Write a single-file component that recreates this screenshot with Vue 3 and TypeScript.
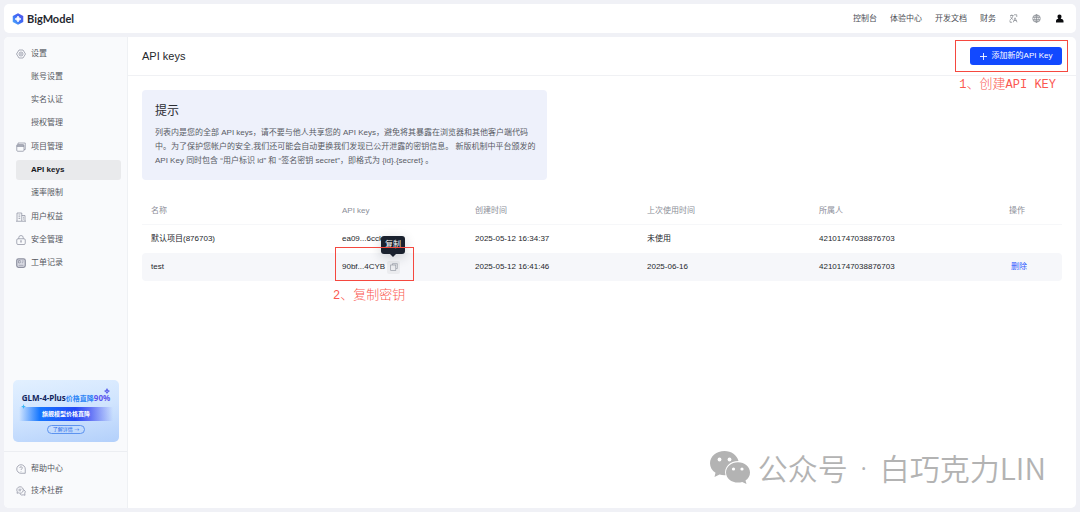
<script setup lang="ts">
interface NavGroup {
  label: string
  icon: 'gear' | 'project' | 'building' | 'lock' | 'ticket'
  children?: string[]
}

interface KeyRow {
  name: string
  key: string
  created: string
  used: string
  owner: string
  highlighted: boolean
}

const topLinks: string[] = ['控制台', '体验中心', '开发文档', '财务']

const groups: NavGroup[] = [
  { label: '设置', icon: 'gear', children: ['账号设置', '实名认证', '授权管理'] },
  { label: '项目管理', icon: 'project', children: ['API keys', '速率限制'] },
  { label: '用户权益', icon: 'building' },
  { label: '安全管理', icon: 'lock' },
  { label: '工单记录', icon: 'ticket' },
]

const rows: KeyRow[] = [
  { name: '默认项目(876703)', key: 'ea09...6cck', created: '2025-05-12 16:34:37', used: '未使用', owner: '42101747038876703', highlighted: false },
  { name: 'test', key: '90bf...4CYB', created: '2025-05-12 16:41:46', used: '2025-06-16', owner: '42101747038876703', highlighted: true },
]
</script>

<template>
  <div class="page">
    <header class="topbar">
      <a class="brand" href="#">
        <svg class="brand-mark" viewBox="0 0 24 24" aria-hidden="true">
          <defs>
            <linearGradient id="brandFill" x1="0" y1="1" x2="1" y2="0">
              <stop offset="0" stop-color="#4fb4ff" />
              <stop offset="0.5" stop-color="#3f6cf5" />
              <stop offset="1" stop-color="#5552e8" />
            </linearGradient>
          </defs>
          <path d="M12 0.5 22.500 6.2v11.6L12 23.5 1.500 17.8V6.2z" fill="url(#brandFill)" />
          <path d="M12 6q1.400 4.600 6 6-4.600 1.400-6 6-1.400-4.600-6-6 4.600-1.400 6-6z" fill="#fff" stroke="#fff" stroke-width="1.500" stroke-linejoin="round" />
        </svg>
        <span>BigModel</span>
      </a>
      <nav class="top-links">
        <a v-for="link in topLinks" :key="link" href="#">{{ link }}</a>
        <button class="icon-btn" type="button" aria-label="翻译">
          <svg viewBox="0 0 18 18" fill="none" stroke="#777b84" stroke-width="1.300">
            <path d="M2 3h7M5.500 1v2M8 3C7 7 5 10 1.500 12M3 5c1 3 3 5 5 6M10 1.500h5.500V6M8.500 16.500l3.500-9 4 9M10 13h5M2 13v3.500h4" />
          </svg>
        </button>
        <button class="icon-btn" type="button" aria-label="语言">
          <svg viewBox="0 0 18 18" fill="none" stroke="#777b84" stroke-width="1.300">
            <circle cx="9" cy="9" r="7.500" />
            <ellipse cx="9" cy="9" rx="3.500" ry="7.500" />
            <path d="M1.500 6.500h15M1.500 11.500h15M9 1.500v15" />
          </svg>
        </button>
        <button class="icon-btn" type="button" aria-label="账户">
          <svg viewBox="0 0 18 18" fill="#0b0c0f">
            <path d="M9 1c2.600 0 4 1.800 4 4.200 0 1.800-.6 3.300-1.700 4.200C15 10 17 11.500 17 14v3H2v-3c0-2.500 1.800-4 4.700-4.600C5.600 8.500 5 7 5 5.200 5 2.800 6.400 1 9 1z" />
          </svg>
        </button>
      </nav>
    </header>

    <div class="shell">
      <aside class="sidebar">
        <nav class="groups">
          <div v-for="group in groups" :key="group.label">
            <a class="item" href="#">
              <svg v-if="group.icon === 'gear'" viewBox="0 0 20 20">
                <path d="M6 2h8l5 8-5 8H6l-5-8z" stroke-linejoin="round" />
                <circle cx="10" cy="10" r="4" />
                <circle cx="10" cy="10" r="1" />
              </svg>
              <svg v-else-if="group.icon === 'project'" viewBox="0 0 20 20">
                <path d="M4 4.500V2h14.500v13H16" />
                <rect x="1.500" y="5" width="14.500" height="13.500" rx="2" />
                <path d="M1.500 8h14.500" stroke-width="3" />
              </svg>
              <svg v-else-if="group.icon === 'building'" viewBox="0 0 20 20">
                <path d="M0 18.500h20M2 18V2h9.500v16M11.500 7H18v11M5 6h3.500M5 9.500h3.500M5 13h3.500M14 10.500h2M14 14h2" />
              </svg>
              <svg v-else-if="group.icon === 'lock'" viewBox="0 0 20 20">
                <rect x="1.500" y="7.500" width="17" height="11.500" rx="2.500" />
                <path d="M5.500 7.500V5.500a4.500 4.500 0 0 1 9 0v2M10 11v4.500M8.500 12h3" />
              </svg>
              <svg v-else viewBox="0 0 20 20">
                <rect x="1.500" y="1.500" width="17" height="17" rx="3.500" fill="#dfe0e8" stroke-width="2.500" />
                <path d="M5 5v5h3.500V5zM11.500 6h4M11.500 9.500h3M5 14.500h10" />
              </svg>
              <span>{{ group.label }}</span>
            </a>
            <div v-if="group.children" class="children">
              <a
                v-for="child in group.children"
                :key="child"
                class="item child"
                :class="{ active: child === 'API keys' }"
                href="#"
              >{{ child }}</a>
            </div>
          </div>
        </nav>

        <a class="promo" href="#">
          <svg class="spark spark-top" viewBox="0 0 12 12" aria-hidden="true">
            <path d="M6 0 8 3.500 12 6 8.500 8.500 6 12 3.500 8.500 0 6 4 3.500z" fill="#5b63ea" />
            <path d="M3 5.500 6 7.500 9 5.500" fill="none" stroke="#c6ccff" />
          </svg>
          <svg class="spark spark-left" viewBox="0 0 12 12" aria-hidden="true">
            <path d="M6 0 7.500 4.500 12 6 7.500 7.500 6 12 4.500 7.500 0 6 4.500 4.500z" fill="#39b6f5" />
          </svg>
          <span class="promo-title">GLM-4-Plus<span class="promo-cut">价格直降</span><span class="promo-pct">90%</span></span>
          <span class="promo-band">旗舰模型价格直降</span>
          <span class="promo-more">了解详情 →</span>
        </a>

        <nav class="support">
          <a class="item" href="#">
            <svg viewBox="0 0 20 20">
              <path d="M18.500 18.500H10A8.500 8.500 0 1 1 18.500 10z" stroke-linejoin="round" />
              <path d="M7.500 8a2.500 2.500 0 1 1 3.500 2.300c-.7.400-1 .8-1 1.700M10 14v1.200" />
            </svg>
            <span>帮助中心</span>
          </a>
          <a class="item" href="#">
            <svg viewBox="0 0 20 20">
              <path d="M8 1.500a6.500 6.500 0 1 1-3 12.200L2 14.500l.6-3A6.500 6.500 0 0 1 8 1.500z" />
              <path d="M15 7a6 6 0 0 1 2.500 8.500l.5 3-3-.8a6 6 0 0 1-7-2M5 6.500h6M5 9.500h5" />
            </svg>
            <span>技术社群</span>
          </a>
        </nav>
      </aside>

      <main class="main">
        <div class="main-head">
          <h1>API keys</h1>
          <div class="add-wrap">
            <button class="add" type="button">
              <svg viewBox="0 0 8 8" aria-hidden="true"><path d="M4 0v8M0 4h8" stroke="#fff" fill="none" /></svg>
              <span>添加新的API Key</span>
            </button>
            <div class="mark mark-add"></div>
            <p class="note note-add"><span class="mono">1</span>、创建<span class="mono">API KEY</span></p>
          </div>
        </div>

        <div class="content">
          <section class="tip">
            <h2>提示</h2>
            <p>
              列表内是您的全部 API keys，请不要与他人共享您的 API Keys，避免将其暴露在浏览器和其他客户端代码<br>中。为了保护您帐户的安全,我们还可能会自动更换我们发现已公开泄露的密钥信息。 新版机制中平台颁发的<br>API Key 同时包含 “用户标识 id” 和 “签名密钥 secret”，即格式为 {id}.{secret} 。
            </p>
          </section>

          <table class="keys">
            <colgroup>
              <col class="c-name"><col class="c-key"><col class="c-created"><col class="c-used"><col class="c-owner"><col class="c-action">
            </colgroup>
            <thead>
              <tr><th>名称</th><th>API key</th><th>创建时间</th><th>上次使用时间</th><th>所属人</th><th>操作</th></tr>
            </thead>
            <tbody>
              <tr v-for="row in rows" :key="row.name" :class="{ hover: row.highlighted }">
                <td>{{ row.name }}</td>
                <td>
                  <div class="key-cell">
                    <span>{{ row.key }}</span>
                    <template v-if="row.highlighted">
                      <button class="copy" type="button" aria-label="复制">
                        <svg viewBox="0 0 18 18" fill="none" stroke="#9498a3" stroke-width="1.500">
                          <path d="M5.500 4.500V1.500h11v11h-3" />
                          <rect x="1.500" y="4.500" width="11.500" height="12" />
                        </svg>
                      </button>
                      <span class="tooltip" role="tooltip">复制</span>
                      <div class="mark mark-copy"></div>
                      <p class="note note-copy"><span class="mono">2</span>、复制密钥</p>
                    </template>
                  </div>
                </td>
                <td>{{ row.created }}</td>
                <td>{{ row.used }}</td>
                <td>{{ row.owner }}</td>
                <td><button v-if="row.highlighted" class="delete" type="button">删除</button></td>
              </tr>
            </tbody>
          </table>
        </div>
      </main>
    </div>

    <div class="watermark">
      <svg viewBox="0 0 40 33" aria-hidden="true">
        <path d="M14.500 0C6.500 0 0 5.400 0 12.200c0 3.900 2.100 7.300 5.500 9.500L4.500 26l5-2.500c1.600.5 3.300.8 5 .8h1C13.500 16 20 10 28.500 10 27 4 21.300 0 14.500 0z" fill="#b3b3b3" />
        <path d="M28 11.200c-6.700 0-12 4.600-12 10.200s5.300 10.100 12 10.100c1.500 0 2.900-.2 4.200-.6L36.500 33l-1-3.600c2.800-1.900 4.500-4.700 4.500-8 0-5.600-5.300-10.200-12-10.200z" fill="#b3b3b3" />
        <g fill="#fff">
          <circle cx="9.500" cy="8.500" r="1.900" /><circle cx="19.500" cy="8.500" r="1.900" />
          <circle cx="23.500" cy="18" r="1.600" /><circle cx="32" cy="18" r="1.600" />
        </g>
      </svg>
      <span>公众号</span><span class="dot">·</span><span>白巧克力LIN</span>
    </div>
  </div>
</template>

<style>
body {
  margin: 0;
  background: #f0f1f6;
}
</style>

<style scoped>
* {
  box-sizing: border-box;
}

.page {
  position: relative;
  display: flex;
  flex-direction: column;
  gap: 4px;
  min-height: 100vh;
  padding: 4px;
  font-family: "Liberation Sans", "Noto Sans CJK SC", sans-serif;
  font-size: 8px;
  line-height: 14px;
  color: #25272c;
}

a {
  color: inherit;
  text-decoration: none;
}

button {
  border: 0;
  padding: 0;
  background: none;
  font: inherit;
  color: inherit;
  cursor: pointer;
}

h1,
h2,
p {
  margin: 0;
  font-weight: 400;
}

svg {
  display: block;
  flex: none;
}

.topbar {
  display: flex;
  align-items: center;
  justify-content: space-between;
  height: 29px;
  padding: 0 11px 0 8px;
  border-radius: 5px;
  background: #fff;
}

.brand {
  display: flex;
  align-items: center;
  gap: 3px;
  font-family: Lato, sans-serif;
  font-size: 11px;
  font-weight: 700;
  color: #25282f;
}

.brand-mark {
  width: 12px;
  height: 12px;
}

.top-links {
  display: flex;
  align-items: center;
  gap: 13px;
  color: #4b4e55;
}

.icon-btn svg {
  width: 9px;
  height: 9px;
}

.icon-btn {
  width: 10px;
}

.shell {
  flex: 1;
  display: flex;
  border-radius: 5px;
  background: #fff;
}

.sidebar {
  display: flex;
  flex-direction: column;
  flex: none;
  width: 124px;
  padding-top: 7px;
  border-right: 1px solid #eff1f4;
  border-radius: 5px 0 0 5px;
  background: #f9fafc;
}

.groups {
  display: flex;
  flex-direction: column;
  gap: 3px;
  padding: 0 6px 0 12px;
}

.item {
  display: flex;
  align-items: center;
  gap: 5px;
  height: 20px;
  color: #55585f;
}

.item svg {
  width: 10px;
  height: 10px;
  fill: none;
  stroke: #8d90a0;
  stroke-width: 1.5;
}

.children {
  display: flex;
  flex-direction: column;
  gap: 3px;
  padding: 3px 0 1px;
}

.child {
  padding-left: 15px;
  border-radius: 3px;
}

.active {
  background: #e9eaec;
  font-weight: 700;
  color: #16181d;
}

.promo {
  position: relative;
  display: flex;
  flex-direction: column;
  align-items: center;
  margin: auto 8px 9px 9px;
  padding: 12px 0 8px;
  border-radius: 5px;
  background: linear-gradient(170deg, #e2f0ff, #d0e4fe 50%, #b3d0fb);
  font-family: "Noto Sans", "Noto Sans CJK SC", sans-serif;
  font-weight: 700;
  white-space: nowrap;
}

.promo-title {
  font-size: 8px;
  line-height: 12px;
  color: #10245c;
}

.promo-cut {
  font-size: 7px;
  color: #2f86f6;
}

.promo-pct {
  color: #5b55ee;
}

.promo-band {
  align-self: stretch;
  margin: 2px 6px 4px;
  background: linear-gradient(90deg, #2f7fff00, #1677ff 22%, #2347f5 60%, #5f6ff5 75%, #7b8cff00);
  font-size: 6px;
  line-height: 14px;
  text-align: center;
  color: #fff;
}

.promo-more {
  padding: 0 5px;
  border: 1px solid #5c93f0;
  border-radius: 5px;
  font-size: 5px;
  font-weight: 400;
  line-height: 7px;
  color: #2c6be8;
}

.spark {
  position: absolute;
}

.spark-top {
  top: 8px;
  right: 9px;
  width: 6px;
  height: 6px;
}

.spark-left {
  top: 24px;
  left: 8px;
  width: 5px;
  height: 5px;
}

.support {
  display: flex;
  flex-direction: column;
  gap: 2px;
  padding: 7px 7px 7px 12px;
  border-top: 1px solid #eceef2;
}

.main {
  flex: 1;
  min-width: 0;
}

.main-head {
  display: flex;
  align-items: center;
  justify-content: space-between;
  height: 39px;
  padding: 0 14px;
  border-bottom: 1px solid #f0f1f4;
}

h1 {
  font-size: 11px;
}

.add-wrap {
  position: relative;
}

.add {
  display: flex;
  align-items: center;
  justify-content: center;
  gap: 5px;
  width: 92px;
  height: 18px;
  border-radius: 3px;
  background: #1249ff;
  color: #fff;
}

.add svg {
  width: 7px;
  height: 7px;
}

.mark {
  position: absolute;
  border: 1px solid #f5483f;
  pointer-events: none;
}

.mark-add {
  inset: -7px -6px -7px -15px;
}

.note {
  position: absolute;
  font-family: "Liberation Mono", "Noto Sans CJK SC", monospace;
  font-size: 13px;
  font-weight: 300;
  line-height: 18px;
  white-space: nowrap;
  color: #fb5850;
}

.mono {
  font-size: 12px;
}

.note-add {
  top: 29px;
  right: 6px;
}

.content {
  display: flex;
  flex-direction: column;
  gap: 17px;
  padding: 14px;
}

.tip {
  width: 100%;
  max-width: 405px;
  padding: 14px 13px 12px;
  border-radius: 4px;
  background: #eef1fb;
}

.tip h2 {
  margin-bottom: 8px;
  font-size: 12px;
  color: #2b2d33;
}

.tip p {
  white-space: nowrap;
  color: #585b64;
}

.keys {
  width: 100%;
  border-collapse: separate;
  border-spacing: 0;
  table-layout: fixed;
}

.c-name {
  width: 200px;
}

.c-key {
  width: 133px;
}

.c-created,
.c-used {
  width: 172px;
}

.c-owner {
  width: 190px;
}

.c-action {
  width: 53px;
}

th,
td {
  height: 28px;
  padding: 0;
  text-align: left;
  white-space: nowrap;
}

th {
  border-bottom: 1px solid #f6f7f9;
  font-weight: 400;
  color: #8b8e98;
}

th:first-child,
td:first-child {
  padding-left: 9px;
}

.hover td {
  background: #f6f7fa;
}

.hover td:first-child {
  border-radius: 4px 0 0 4px;
}

.hover td:last-child {
  border-radius: 0 4px 4px 0;
}

.key-cell {
  position: relative;
  display: flex;
  align-items: center;
  gap: 2px;
}

.copy {
  display: flex;
  align-items: center;
  justify-content: center;
  width: 13px;
  height: 13px;
  border-radius: 2px;
  background: #ebecef;
}

.copy svg {
  width: 8px;
  height: 8px;
}

.tooltip {
  position: absolute;
  left: 39px;
  bottom: 20px;
  padding: 2px 4px;
  border-radius: 3px;
  background: #1a212e;
  box-shadow: 0 3px 12px #1a212e33;
  color: #fff;
}

.tooltip::after {
  content: "";
  position: absolute;
  top: 100%;
  left: 50%;
  margin-left: -3px;
  border: 3px solid transparent;
  border-top-color: #1a212e;
  border-bottom-width: 0;
}

.mark-copy {
  left: -7px;
  top: -13px;
  width: 79px;
  height: 34px;
}

.note-copy {
  left: -9px;
  top: 27px;
}

.delete {
  padding: 0 2px;
  color: #2e5bff;
}

.watermark {
  position: absolute;
  right: 34px;
  bottom: 23px;
  display: flex;
  align-items: center;
  font-family: "Noto Sans CJK SC", sans-serif;
  font-size: 30px;
  font-weight: 350;
  line-height: 44px;
  color: #b3b3b3;
  pointer-events: none;
}

.watermark svg {
  width: 40px;
  height: 33px;
  margin-right: 8px;
}

.dot {
  width: 32px;
  font-family: "Noto Sans", sans-serif;
  text-align: center;
}
</style>
